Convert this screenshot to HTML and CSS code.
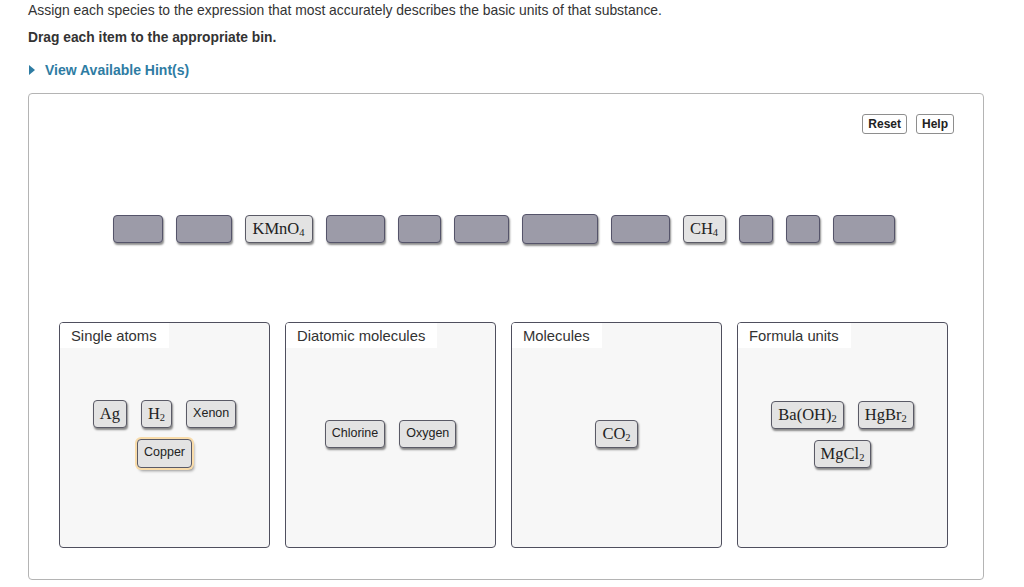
FILE: index.html
```html
<!DOCTYPE html>
<html>
<head>
<meta charset="utf-8">
<link rel="stylesheet" href="styles.css">
</head>
<body>
<p class="intro">Assign each species to the expression that most accurately describes the basic units of that substance.</p>
<p class="instr">Drag each item to the appropriate bin.</p>
<div class="hint"><span class="tri"></span>View Available Hint(s)</div>
<div class="panel">
  <div class="toolbar">
    <button class="btn">Reset</button>
    <button class="btn">Help</button>
  </div>
  <div class="pool">
    <div class="blank" style="width:50px"></div>
    <div class="blank" style="width:56px"></div>
    <div class="chip f" style="width:68px">KMnO<sub>4</sub></div>
    <div class="blank" style="width:59px"></div>
    <div class="blank" style="width:43px"></div>
    <div class="blank" style="width:55px"></div>
    <div class="blank big" style="width:76px"></div>
    <div class="blank" style="width:59px"></div>
    <div class="chip f" style="width:43px">CH<sub>4</sub></div>
    <div class="blank" style="width:34px"></div>
    <div class="blank" style="width:34px"></div>
    <div class="blank" style="width:62px"></div>
  </div>
  <div class="bins">
    <div class="bin">
      <div class="label">Single atoms</div>
      <div class="items">
        <div class="chip f">Ag</div>
        <div class="chip f">H<sub>2</sub></div>
        <div class="chip s">Xenon</div>
        <div class="chip s focus">Copper</div>
      </div>
    </div>
    <div class="bin">
      <div class="label">Diatomic molecules</div>
      <div class="items">
        <div class="chip s">Chlorine</div>
        <div class="chip s">Oxygen</div>
      </div>
    </div>
    <div class="bin">
      <div class="label">Molecules</div>
      <div class="items">
        <div class="chip f">CO<sub>2</sub></div>
      </div>
    </div>
    <div class="bin">
      <div class="label">Formula units</div>
      <div class="items">
        <div class="chip f">Ba(OH)<sub>2</sub></div>
        <div class="chip f">HgBr<sub>2</sub></div>
        <div class="chip f">MgCl<sub>2</sub></div>
      </div>
    </div>
  </div>
</div>
</body>
</html>
```

FILE: styles.css
```css
html, body {
  margin: 0;
  padding: 0;
  background: #ffffff;
}
body {
  font-family: "Liberation Sans", Arial, Helvetica, sans-serif;
  color: #333333;
  padding: 0 40px 0 28px;
  width: 956px;
}
.intro {
  margin: 0;
  padding-top: 2px;
  font-size: 13.9px;
  line-height: 16px;
}
.instr {
  margin: 12px 0 0 0;
  font-size: 13.8px;
  line-height: 16px;
  font-weight: bold;
}
.hint {
  margin-top: 16px;
  height: 16px;
  font-size: 14px;
  line-height: 16px;
  font-weight: bold;
  color: #2e7ca3;
  display: flex;
  align-items: center;
}
.tri {
  width: 0;
  height: 0;
  border-left: 6px solid #2e7ca3;
  border-top: 5px solid transparent;
  border-bottom: 5px solid transparent;
  margin: 0 10px 0 1px;
}
.panel {
  margin-top: 15px;
  border: 1px solid #b4b4b4;
  border-radius: 4px;
  height: 487px;
  box-sizing: border-box;
  padding: 20px 0 0 0;
}
.toolbar {
  display: flex;
  justify-content: flex-end;
  gap: 9px;
  margin-right: 29px;
}
.btn {
  font-family: "Liberation Sans", Arial, sans-serif;
  font-size: 12px;
  font-weight: bold;
  color: #222;
  background: #ffffff;
  border: 1px solid #8e8e8e;
  border-radius: 3px;
  height: 20px;
  padding: 0 5px;
  line-height: 18px;
  margin: 0;
}
.pool {
  margin-top: 80px;
  margin-right: 5px;
  display: flex;
  justify-content: center;
  align-items: center;
  gap: 13px;
  height: 30px;
}
.blank {
  height: 28px;
  box-sizing: border-box;
  background: #9c9ba8;
  border: 1px solid #55546a;
  border-radius: 4px;
  box-shadow: 1px 2px 2px rgba(0, 0, 0, 0.45);
}
.blank.big {
  height: 30px;
}
.chip {
  box-sizing: border-box;
  background: #e3e3e3;
  border: 1px solid #5a5a66;
  border-radius: 4px;
  box-shadow: 1px 2px 2px rgba(0, 0, 0, 0.45);
  color: #222;
  display: block;
  text-align: center;
  height: 28px;
  line-height: 25px;
  padding: 0 6px;
  white-space: nowrap;
}
.chip.f {
  font-family: "Liberation Serif", "Times New Roman", serif;
  font-size: 16.5px;
}
.chip.s {
  font-family: "Liberation Sans", Arial, sans-serif;
  font-size: 12.5px;
}
.chip sub {
  font-size: 10.5px;
  vertical-align: -2px;
  line-height: 0;
}
.chip.focus {
  height: 29px;
  box-shadow: 0 0 0 2px #f9dcaa, 2px 3px 3px rgba(0, 0, 0, 0.4);
}
.bins {
  margin-top: 78px;
  margin-right: 5px;
  display: flex;
  justify-content: center;
  gap: 15px;
}
.bin {
  width: 211px;
  height: 226px;
  box-sizing: border-box;
  background: #f7f7f7;
  border: 1px solid #4f4f5e;
  border-radius: 4px;
  display: grid;
  grid-template-areas: "cell";
}
.label {
  grid-area: cell;
  align-self: start;
  justify-self: start;
  background: #ffffff;
  font-size: 14.8px;
  line-height: 17px;
  color: #333;
  padding: 5px 12px 3px 11px;
  border-top-left-radius: 3px;
}
.items {
  grid-area: cell;
  align-self: center;
  justify-self: center;
  display: flex;
  flex-wrap: wrap;
  justify-content: center;
  column-gap: 14px;
  row-gap: 11px;
  width: 160px;
  padding-bottom: 2px;
}
```
